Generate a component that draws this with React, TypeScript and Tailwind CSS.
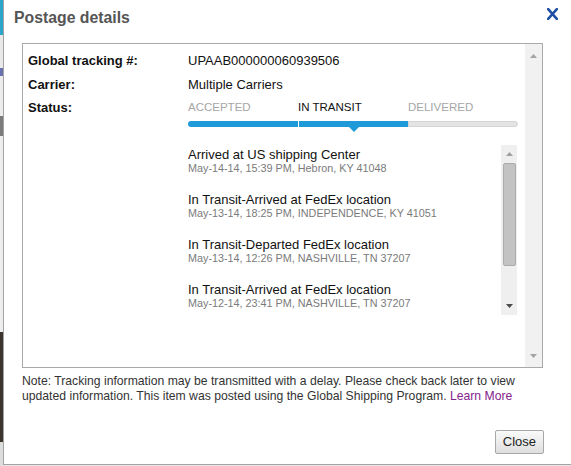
import React from "react";

const events = [
  { title: "Arrived at US shipping Center", detail: "May-14-14, 15:39 PM, Hebron, KY 41048" },
  { title: "In Transit-Arrived at FedEx location", detail: "May-13-14, 18:25 PM, INDEPENDENCE, KY 41051" },
  { title: "In Transit-Departed FedEx location", detail: "May-13-14, 12:26 PM, NASHVILLE, TN 37207" },
  { title: "In Transit-Arrived at FedEx location", detail: "May-12-14, 23:41 PM, NASHVILLE, TN 37207" },
  { title: "In Transit-Picked up", detail: "May-12-14, 17:02 PM, NASHVILLE, TN 37207" },
];

function Arrow({ up, color }: { up?: boolean; color: string }) {
  return (
    <svg width="7" height="4" viewBox="0 0 7 4">
      <path d={up ? "M0 4 L3.5 0 L7 4 Z" : "M0 0 L3.5 4 L7 0 Z"} fill={color} />
    </svg>
  );
}

export default function App() {
  return (
    <div className="flex h-[466px] w-[571px] overflow-hidden bg-[#e6e6e6] font-['Liberation_Sans',Arial,sans-serif]">
      {/* sliver of the page behind the dialog */}
      <div className="flex w-[3px] flex-col">
        <div className="h-[35px] bg-[#2ba5c9]" />
        <div className="h-[33px] bg-[#e9e9ea]" />
        <div className="h-[8px] bg-[#6a6fb0]" />
        <div className="h-[40px] bg-[#ececec]" />
        <div className="h-[20px] bg-[#7b7b7b]" />
        <div className="h-[196px] bg-[#ededed]" />
        <div className="h-[110px] bg-[#3b352e]" />
        <div className="flex-1 bg-[#dcdcdc]" />
      </div>

      <div className="flex h-[465px] flex-1 flex-col border-b border-l border-[#a3a3a3] bg-white">
        <div className="flex h-[43px] items-start justify-between pl-[10px] pr-[13px]">
          <h1 className="pt-[9px] text-[15.8px] font-bold leading-[17px] text-[#555555]">Postage details</h1>
          <button className="mt-[8px] text-[#1f4fa3]" aria-label="Close">
            <svg width="11" height="12" viewBox="0 0 11 12">
              <path d="M1.2 1.2 L9.8 10.8 M9.8 1.2 L1.2 10.8" stroke="currentColor" strokeWidth="2.6" strokeLinecap="square" />
            </svg>
          </button>
        </div>

        <div className="ml-[18px] flex h-[325px] w-[521px] border border-[#a9a9a9]">
          <div className="flex-1 pl-[5px] pt-[5px]">
            <div className="grid grid-cols-[160px_1fr] text-[13px] leading-[23.5px] text-[#111]">
              <div className="font-bold">Global tracking #:</div>
              <div>UPAAB000000060939506</div>
              <div className="font-bold">Carrier:</div>
              <div>Multiple Carriers</div>
              <div className="font-bold">Status:</div>
              <div className="w-[330px]">
                <div className="grid grid-cols-3 text-[11.5px] leading-[23.5px]">
                  <span className="text-[#a6a6a6]">ACCEPTED</span>
                  <span className="text-[#111]">IN TRANSIT</span>
                  <span className="text-[#a6a6a6]">DELIVERED</span>
                </div>
                <div className="relative mt-[1px] flex h-[6px]">
                  <div className="h-[6px] w-[110px] rounded-l-full bg-[#1f9ad8]" />
                  <div className="h-[6px] w-[1px] bg-white" />
                  <div className="h-[6px] w-[109px] bg-[#1f9ad8]" />
                  <div className="h-[6px] w-[110px] rounded-r-full border border-[#d4d4d4] bg-[#e4e4e4]" />
                  <svg className="absolute left-[161px] top-[6px]" width="10" height="5" viewBox="0 0 10 5">
                    <path d="M0 0 L5 5 L10 0 Z" fill="#1f9ad8" />
                  </svg>
                </div>

                <div className="mt-[18px] flex h-[170px] w-[329px]">
                  <div className="flex-1 overflow-hidden pt-[3px]">
                    {events.map((e) => (
                      <div key={e.detail} className="mb-[18px]">
                        <div className="text-[13px] leading-[14px] text-[#111]">{e.title}</div>
                        <div className="text-[10.8px] leading-[13px] text-[#7a7a7a]">{e.detail}</div>
                      </div>
                    ))}
                  </div>
                  <div className="flex w-[16px] flex-col items-center bg-[#efefef]">
                    <div className="flex h-[18px] items-center">
                      <Arrow up color="#a0a0a0" />
                    </div>
                    <div className="h-[103px] w-[13px] rounded-[2px] border border-[#ababab] bg-[#c3c3c3]" />
                    <div className="flex flex-1 items-end pb-[7px]">
                      <Arrow color="#4a4a4a" />
                    </div>
                  </div>
                </div>
              </div>
            </div>
          </div>
          <div className="flex w-[17px] flex-col items-center justify-between bg-[#f1f1f1] pb-[9px] pt-[10px]">
            <Arrow up color="#a3a3a3" />
            <Arrow color="#a3a3a3" />
          </div>
        </div>

        <p className="ml-[18px] mt-[6px] w-[510px] text-[12.2px] leading-[15px] text-[#333]">
          Note: Tracking information may be transmitted with a delay. Please check back later to view updated
          information. This item was posted using the Global Shipping Program.{" "}
          <span className="text-[#85248b]">Learn More</span>
        </p>

        <div className="mt-auto flex justify-end pb-[10px] pr-[27px]">
          <button className="h-[24px] rounded-[2px] border border-[#a8a8a8] bg-gradient-to-b from-[#fafafa] to-[#dedede] px-[7px] text-[13px] text-[#222]">
            Close
          </button>
        </div>
      </div>
    </div>
  );
}
